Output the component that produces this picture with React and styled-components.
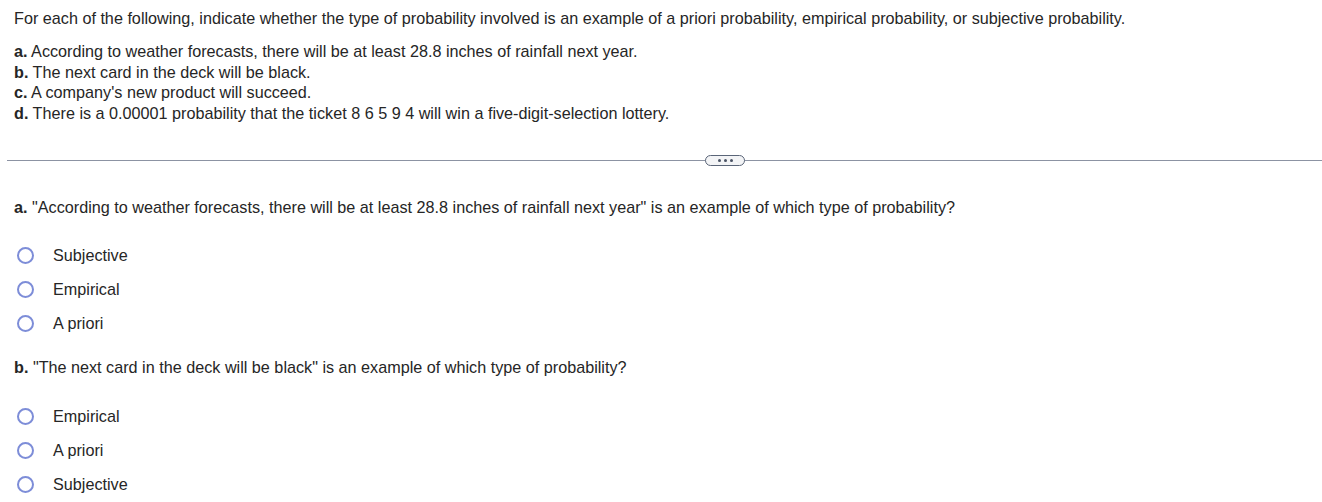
import React from 'react';
import styled, { createGlobalStyle } from 'styled-components';

const Global = createGlobalStyle`
  body {
    margin: 0;
    background: #fff;
    font-family: "Liberation Sans", Arial, sans-serif;
    font-size: 16.2px;
    color: #262626;
  }
`;

const Page = styled.div`
  padding: 8px 0 0 14px;
`;

const Intro = styled.p`
  margin: 0 0 13px;
  line-height: 20px;
`;

const Parts = styled.div`
  display: flex;
  flex-direction: column;
  line-height: 20.5px;
`;

const Divider = styled.div`
  position: relative;
  margin: 37px 0 0 -7px;
  height: 1px;
  background: #8c93a3;
`;

const MoreButton = styled.button`
  position: absolute;
  left: 698px;
  top: -5px;
  width: 40px;
  height: 11px;
  padding: 0;
  border: 1px solid #5a6578;
  border-radius: 6px;
  background: #f3f4f6;
  display: flex;
  align-items: center;
  justify-content: center;
  gap: 3px;
`;

const Dot = styled.span`
  width: 3px;
  height: 3px;
  border-radius: 50%;
  background: #4a5364;
`;

const Question = styled.div`
  margin-top: ${p => p.$top}px;
  line-height: 20px;
`;

const Options = styled.div`
  display: flex;
  flex-direction: column;
  gap: 14px;
  margin: ${p => p.$top}px 0 0 3px;
`;

const Option = styled.label`
  display: flex;
  align-items: center;
  gap: 19px;
  line-height: 20px;
`;

const Radio = styled.span`
  width: 13px;
  height: 13px;
  border: 2px solid #7d8dd8;
  border-radius: 50%;
  flex: none;
`;

function Choices({ items, top }) {
  return (
    <Options $top={top}>
      {items.map(t => (
        <Option key={t}>
          <Radio />
          {t}
        </Option>
      ))}
    </Options>
  );
}

export default function App() {
  return (
    <>
      <Global />
      <Page>
        <Intro>
          For each of the following, indicate whether the type of probability involved is an example of a priori probability, empirical probability, or subjective probability.
        </Intro>
        <Parts>
          <div><b>a.</b> According to weather forecasts, there will be at least 28.8 inches of rainfall next year.</div>
          <div><b>b.</b> The next card in the deck will be black.</div>
          <div><b>c.</b> A company's new product will succeed.</div>
          <div><b>d.</b> There is a 0.00001 probability that the ticket 8 6 5 9 4 will win a five-digit-selection lottery.</div>
        </Parts>
        <Divider>
          <MoreButton><Dot /><Dot /><Dot /></MoreButton>
        </Divider>
        <Question $top={36}>
          <b>a.</b> "According to weather forecasts, there will be at least 28.8 inches of rainfall next year" is an example of which type of probability?
        </Question>
        <Choices top={28} items={['Subjective', 'Empirical', 'A priori']} />
        <Question $top={24}>
          <b>b.</b> "The next card in the deck will be black" is an example of which type of probability?
        </Question>
        <Choices top={29} items={['Empirical', 'A priori', 'Subjective']} />
      </Page>
    </>
  );
}
